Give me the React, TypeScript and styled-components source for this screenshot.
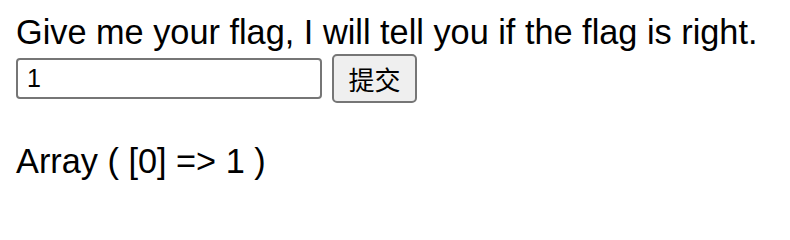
import { FC } from 'react'
import styled, { createGlobalStyle } from 'styled-components'

const GlobalStyle = createGlobalStyle`
  html, body {
    margin: 0;
    padding: 0;
    background: #ffffff;
  }
  body {
    font-family: 'Liberation Sans', Arial, 'Noto Sans CJK SC', sans-serif;
    color: #000000;
  }
`

const Page = styled.div`
  padding: 12px 16px 0 16px;
  display: flex;
  flex-direction: column;
  font-size: 34.3px;
  line-height: 40px;
`

const Prompt = styled.div`
  white-space: nowrap;
`

const FlagForm = styled.form`
  display: flex;
  align-items: center;
  gap: 10px;
  margin: 2px 0 0 0;
`

const FlagInput = styled.input`
  box-sizing: border-box;
  width: 306px;
  height: 41px;
  margin: 0;
  padding: 0 9px;
  border: 2px solid #767676;
  border-radius: 4px;
  font-family: 'Liberation Sans', Arial, sans-serif;
  font-size: 25px;
  color: #000000;
  background: #ffffff;
  outline: none;
`

const SubmitButton = styled.button`
  box-sizing: border-box;
  width: 85px;
  height: 49px;
  margin: 0;
  padding: 0;
  border: 2px solid #767676;
  border-radius: 5px;
  background: #efefef;
  font-family: 'Noto Sans CJK SC', sans-serif;
  font-size: 26px;
  color: #000000;
  display: flex;
  align-items: center;
  justify-content: center;
`

const Output = styled.div`
  margin-top: 38px;
  white-space: pre;
`

const App: FC = () => {
  return (
    <>
      <GlobalStyle />
      <Page>
        <Prompt>Give me your flag, I will tell you if the flag is right.</Prompt>
        <FlagForm onSubmit={e => e.preventDefault()}>
          <FlagInput type="text" name="flag" defaultValue="1" />
          <SubmitButton type="submit">提交</SubmitButton>
        </FlagForm>
        <Output>Array ( [0] =&gt; 1 )</Output>
      </Page>
    </>
  )
}

export default App
